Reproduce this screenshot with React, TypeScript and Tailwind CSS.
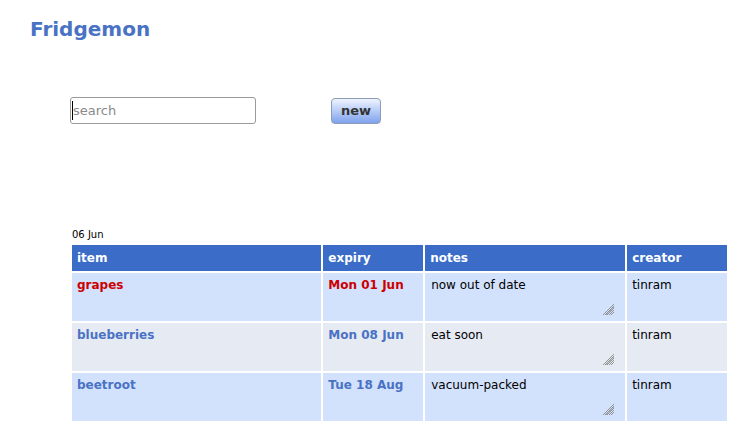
import React from "react";

type Item = {
  name: string;
  expiry: string;
  notes: string;
  creator: string;
  expired?: boolean;
};

const items: Item[] = [
  { name: "grapes", expiry: "Mon 01 Jun", notes: "now out of date", creator: "tinram", expired: true },
  { name: "blueberries", expiry: "Mon 08 Jun", notes: "eat soon", creator: "tinram" },
  { name: "beetroot", expiry: "Tue 18 Aug", notes: "vacuum-packed", creator: "tinram" },
];

function Grip() {
  return (
    <svg
      className="pointer-events-none absolute bottom-[2px] right-[3px]"
      width="11"
      height="11"
      viewBox="0 0 11 11"
    >
      {[0, 2, 4, 6, 8].map((o) => (
        <line key={o} x1={o} y1="11" x2="11" y2={o} stroke="#8a8a8a" strokeWidth="0.9" />
      ))}
      <line x1="3" y1="11" x2="11" y2="3" stroke="#555" strokeWidth="0.6" strokeDasharray="1 1" />
    </svg>
  );
}

export default function App() {
  return (
    <div
      className="min-h-[446px] w-[729px] overflow-hidden bg-white text-[12px] text-black"
      style={{ fontFamily: '"DejaVu Sans", Verdana, sans-serif' }}
    >
      <h1 className="ml-[30px] pt-[17px] text-[20px] font-bold leading-[25px] text-[#4a72c4]">
        Fridgemon
      </h1>

      <div className="ml-[70px] mt-[55px] flex items-center">
        <div className="relative">
          <input
            type="text"
            placeholder="search"
            className="h-[27px] w-[186px] rounded-[3px] border border-[#9a9a9a] bg-white px-[2px] text-[13px] text-black outline-none placeholder:text-[#8a8a8a]"
          />
          <span className="absolute left-[2px] top-[4px] h-[19px] w-px bg-black" />
        </div>
        <button className="ml-[75px] h-[26px] w-[50px] rounded-[4px] border border-[#8d9cb8] bg-gradient-to-b from-[#f0f4ff] to-[#7fa2ec] text-[13px] font-bold text-[#333]">
          new
        </button>
      </div>

      <div className="ml-[72px] mt-[105px] text-[10px] leading-[12px]">06 Jun</div>

      <table className="ml-[70px] mt-[2px] border-separate border-spacing-[2px] leading-[15px]">
        <thead>
          <tr className="bg-[#3a6cc8] text-left text-white">
            <th className="h-[26px] w-[250px] px-[5px] py-0 font-bold">item</th>
            <th className="w-[100px] px-[5px] py-0 font-bold">expiry</th>
            <th className="w-[200px] px-[5px] py-0 font-bold">notes</th>
            <th className="w-[100px] px-[5px] py-0 font-bold">creator</th>
          </tr>
        </thead>
        <tbody>
          {items.map((item, i) => (
            <tr key={item.name} className={i % 2 === 1 ? "bg-[#e6eaf3]" : "bg-[#d3e2fc]"}>
              <td
                className={`h-[48px] px-[5px] pt-[5px] align-top font-bold ${
                  item.expired ? "text-[#cc0000]" : "text-[#4a72c4]"
                }`}
              >
                {item.name}
              </td>
              <td
                className={`px-[5px] pt-[5px] align-top font-bold ${
                  item.expired ? "text-[#cc0000]" : "text-[#4a72c4]"
                }`}
              >
                {item.expiry}
              </td>
              <td className="p-0 align-top">
                <div className="relative mx-[2px] mt-[2px] w-[190px]">
                  <textarea
                    defaultValue={item.notes}
                    className="block h-[42px] w-[190px] resize-none border-0 bg-transparent px-[4px] py-[3px] text-[12px] leading-[15px] text-black outline-none"
                    style={{ fontFamily: '"DejaVu Sans", Verdana, sans-serif' }}
                  />
                  <Grip />
                </div>
              </td>
              <td className="px-[5px] pt-[5px] align-top">{item.creator}</td>
            </tr>
          ))}
        </tbody>
      </table>
    </div>
  );
}
